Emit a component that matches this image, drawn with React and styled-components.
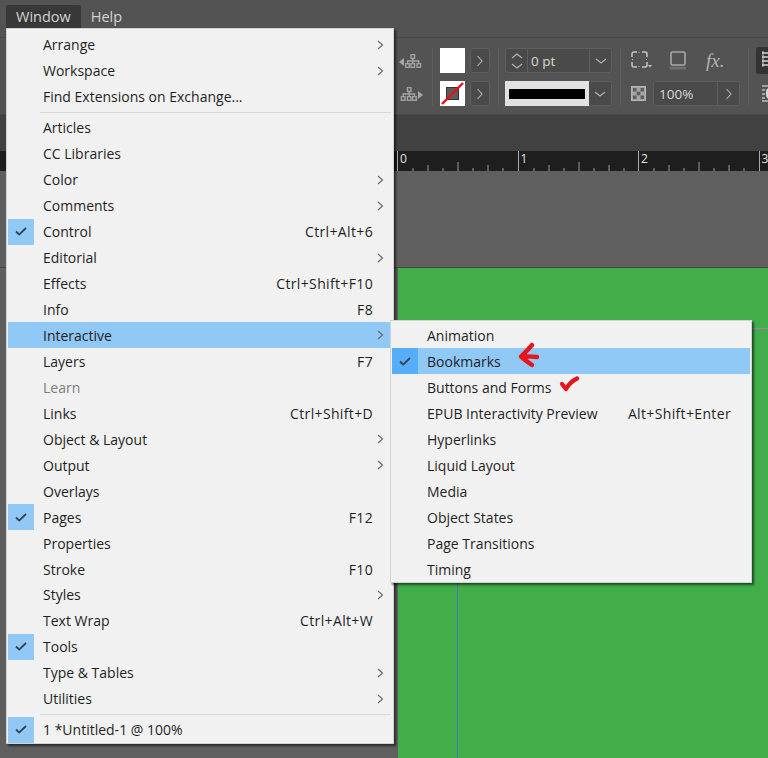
import React from "react";
import styled, { createGlobalStyle } from "styled-components";

const GlobalStyle = createGlobalStyle`
  html, body {
    margin: 0;
    padding: 0;
    background: #5f5f5f;
  }
  * {
    box-sizing: border-box;
  }
`;

const mainItems = [
  { label: "Arrange", arrow: true },
  { label: "Workspace", arrow: true },
  { label: "Find Extensions on Exchange..." },
  { divider: true },
  { label: "Articles" },
  { label: "CC Libraries" },
  { label: "Color", arrow: true },
  { label: "Comments", arrow: true },
  { label: "Control", checked: true, shortcut: "Ctrl+Alt+6" },
  { label: "Editorial", arrow: true },
  { label: "Effects", shortcut: "Ctrl+Shift+F10" },
  { label: "Info", shortcut: "F8" },
  { label: "Interactive", arrow: true, active: true },
  { label: "Layers", shortcut: "F7" },
  { label: "Learn", disabled: true },
  { label: "Links", shortcut: "Ctrl+Shift+D" },
  { label: "Object & Layout", arrow: true },
  { label: "Output", arrow: true },
  { label: "Overlays" },
  { label: "Pages", checked: true, shortcut: "F12" },
  { label: "Properties" },
  { label: "Stroke", shortcut: "F10" },
  { label: "Styles", arrow: true },
  { label: "Text Wrap", shortcut: "Ctrl+Alt+W" },
  { label: "Tools", checked: true },
  { label: "Type & Tables", arrow: true },
  { label: "Utilities", arrow: true },
  { divider: true },
  { label: "1 *Untitled-1 @ 100%", checked: true },
];

const subItems = [
  { label: "Animation" },
  { label: "Bookmarks", checked: true, active: true },
  { label: "Buttons and Forms" },
  { label: "EPUB Interactivity Preview", shortcut: "Alt+Shift+Enter" },
  { label: "Hyperlinks" },
  { label: "Liquid Layout" },
  { label: "Media" },
  { label: "Object States" },
  { label: "Page Transitions" },
  { label: "Timing" },
];

const Screen = styled.div`
  position: relative;
  width: 768px;
  height: 758px;
  overflow: hidden;
  background: #5f5f5f;
  font-family: "Open Sans", "Noto Sans", sans-serif;
`;

const MenuBar = styled.div`
  height: 38px;
  padding: 5px 0 0 6px;
  display: flex;
  background: #535353;
  border-bottom: 1px solid #4a4a4a;
`;

const BarItem = styled.div`
  height: 23px;
  padding: 0 10px;
  line-height: 24px;
  font-size: 14.5px;
  color: #d4d4d4;
  border-radius: 2px 2px 0 0;
  background: ${(p) => (p.$open ? "#383838" : "transparent")};
`;

const ControlPanel = styled.div`
  height: 76px;
  padding: 10px 0 0 399px;
  display: flex;
  background: #535353;
`;

const Group = styled.div`
  display: grid;
  grid-template-columns: ${(p) => p.$cols};
  grid-auto-rows: 25px;
  column-gap: ${(p) => p.$gap || 0}px;
  row-gap: 8px;
  align-items: center;
  justify-items: start;
  padding-right: ${(p) => p.$right}px;
  margin-right: ${(p) => p.$margin}px;
  border-right: ${(p) => (p.$last ? "none" : "1px solid #5c5c5c")};
  height: 58px;
`;

const Swatch = styled.div`
  position: relative;
  width: 25px;
  height: 25px;
  background: #fff;
  overflow: hidden;
`;

const SmallButton = styled.div`
  width: 20px;
  height: 25px;
  border: 1px solid #5e5e5e;
  border-radius: 3px;
  background: #4a4a4a;
  display: flex;
  align-items: center;
  justify-content: center;
`;

const Combo = styled.div`
  display: flex;
  align-items: stretch;
  width: ${(p) => p.$w}px;
  height: 25px;
  border: 1px solid #5e5e5e;
  border-radius: 3px;
  background: #4a4a4a;
  color: #d8d8d8;
  font-size: 13.5px;
`;

const Stepper = styled.div`
  flex: none;
  width: 21px;
  display: flex;
  flex-direction: column;
  align-items: center;
  justify-content: center;
  gap: 4px;
`;

const ComboPart = styled.div`
  display: flex;
  align-items: center;
  justify-content: ${(p) => (p.$text ? "flex-start" : "center")};
  width: ${(p) => (p.$text ? "auto" : `${p.$w}px`)};
  flex: ${(p) => (p.$text ? 1 : "none")};
  padding-left: ${(p) => p.$pad || 0}px;
  border-left: ${(p) => (p.$divided ? "1px solid #5e5e5e" : "none")};
`;

const StrokeSample = styled.div`
  flex: 1;
  display: flex;
  align-items: center;
  padding: 0 4px;
  margin: -1px 0 -1px -1px;
  background: #e1e1e1;
  &::before {
    content: "";
    flex: 1;
    height: 10px;
    background: #000;
  }
`;

const EffectsRow = styled.div`
  grid-column: 1 / -1;
  display: flex;
  align-items: center;
  gap: 16px;
`;

const FxLabel = styled.span`
  font-family: "Liberation Serif", serif;
  font-style: italic;
  font-size: 19px;
  color: #b4b4b4;
  margin-left: 1px;
`;

const TreeSvg = styled.svg`
  transform: ${(p) => (p.$flip ? "scaleX(-1)" : "none")};
`;

const StyleTile = styled.div`
  width: 20px;
  height: 27px;
  margin-top: -1px;
  padding: 3px 0 0 5px;
  background: ${(p) => (p.$dark ? "#333333" : "transparent")};
  border-radius: 3px;
`;

const Strip = styled.div`
  height: 37px;
  background: #424242;
  border-top: 1px solid #4a4a4a;
`;

const Ruler = styled.div`
  height: 20px;
  padding-left: 397px;
  display: flex;
  background: #1e1e1e;
`;

const RulerInch = styled.div`
  position: relative;
  flex: none;
  width: 120.5px;
  padding-left: 2px;
  border-left: 1px solid #a9a9a9;
  font-size: 12px;
  line-height: 15px;
  color: #e2e2e2;
`;

const RulerTicks = styled.svg`
  position: absolute;
  left: 0;
  bottom: 0;
`;

const Pasteboard = styled.div`
  height: 97px;
  background: #5f5f5f;
  border-bottom: 1px solid #444444;
`;

const PageArea = styled.div`
  height: 490px;
  padding-left: 398px;
`;

const GreenPage = styled.div`
  position: relative;
  height: 100%;
  background: #41ad4b;
`;

const BleedLine = styled.div`
  position: absolute;
  left: 0;
  right: 0;
  top: 60px;
  height: 1px;
  background: #a384a8;
`;

const ColumnLine = styled.div`
  position: absolute;
  left: 59px;
  top: 60px;
  bottom: 0;
  width: 1px;
  background: #5a72a6;
`;

const Menu = styled.div`
  position: absolute;
  left: ${(p) => p.$left}px;
  top: ${(p) => p.$top}px;
  width: ${(p) => p.$w}px;
  height: ${(p) => p.$h}px;
  padding: ${(p) => p.$pad};
  background: #f1f1f1;
  border: 1px solid #d3d3d3;
  box-shadow: 2px 2px 2px rgba(0, 0, 0, 0.55);
  font-size: 14px;
`;

const Row = styled.div`
  display: flex;
  align-items: center;
  height: 25.96px;
  color: ${(p) => (p.$disabled ? "#7d7d7d" : "#1f1f1f")};
  background: ${(p) => (p.$active ? "#90c8f6" : "transparent")};
`;

const CheckCell = styled.div`
  flex: none;
  width: 26px;
  height: 26px;
  margin-right: 9px;
  display: flex;
  align-items: center;
  justify-content: center;
  background: ${(p) =>
    !p.$checked ? "transparent" : p.$active ? "#56aefb" : "#90c8f6"};
`;

const Label = styled.span`
  flex: 1;
  white-space: nowrap;
`;

const Shortcut = styled.span`
  white-space: nowrap;
  letter-spacing: 0.35px;
  margin-right: ${(p) => p.$right}px;
`;

const ArrowCell = styled.div`
  flex: none;
  width: 15px;
  display: flex;
  align-items: center;
`;

const Divider = styled.div`
  height: 1px;
  margin: 2px 1px 2px 32px;
  background: #d7d7d7;
`;

const Annotation = styled.svg`
  position: absolute;
  left: ${(p) => p.$left}px;
  top: ${(p) => p.$top}px;
`;

const Check = () => (
  <svg width="12" height="9" viewBox="0 0 12 9">
    <path d="M1 4.5 4.2 7.6 11 1" fill="none" stroke="#35414d" strokeWidth="1.8" />
  </svg>
);

const MenuArrow = () => (
  <svg width="7" height="10" viewBox="0 0 7 10">
    <path d="M1 1l4.5 4L1 9" fill="none" stroke="#6b6b6b" strokeWidth="1.2" />
  </svg>
);

const Chevron = ({ dir = "right" }) => {
  const paths = {
    right: "M1.5 1 6 6 1.5 11",
    down: "M1 1 6 5l5-4",
    up: "M1 5 6 1l5 4",
  };
  const size = dir === "right" ? [8, 12] : [12, 6];
  return (
    <svg width={size[0]} height={size[1]} viewBox={`0 0 ${size[0]} ${size[1]}`}>
      <path d={paths[dir]} fill="none" stroke="#b4b4b4" strokeWidth="1.1" />
    </svg>
  );
};

const TreeIcon = ({ flip }) => (
  <TreeSvg $flip={flip} width="24" height="14" viewBox="0 0 24 14">
    <path d="M0 8l5-4v8z" fill="#a6a6a6" />
    <g fill="none" stroke="#a6a6a6" strokeWidth="1.3">
      <rect x="12" y="0.7" width="3.6" height="3.6" />
      <rect x="6.7" y="9.7" width="3.6" height="3.6" />
      <rect x="12" y="9.7" width="3.6" height="3.6" />
      <rect x="18" y="9.7" width="3.6" height="3.6" />
      <path d="M13.8 4.3v5.4M8.5 9.7V7h11.3v2.7" />
    </g>
  </TreeSvg>
);

const FrameIcon = () => (
  <svg width="22" height="20" viewBox="0 0 22 20">
    <path
      d="M1 6V3a2 2 0 0 1 2-2h3M11 1h3a2 2 0 0 1 2 2v3M16 11v3a2 2 0 0 1-2 2h-3M6 16H3a2 2 0 0 1-2-2v-3"
      fill="none"
      stroke="#c6c6c6"
      strokeWidth="1.5"
    />
    <path d="M1 8.5h1M15 8.5h1M8 1v1M8 15v1" stroke="#c6c6c6" />
    <path d="M17 14h4l-2 2.5z" fill="#c6c6c6" />
  </svg>
);

const ShadowIcon = () => (
  <svg width="20" height="22" viewBox="0 0 20 22">
    <rect x="2" y="2" width="14" height="13" rx="1.5" fill="none" stroke="#a8a8a8" strokeWidth="1.6" />
    <path d="M1 18h16" stroke="#6f6f6f" strokeWidth="3" />
  </svg>
);

const OpacityIcon = () => (
  <svg width="15" height="15" viewBox="0 0 15 15">
    <rect x="0.5" y="0.5" width="14" height="14" fill="#a3a3a3" stroke="#b5b5b5" />
    <path d="M2 2h3.5v3.5H2zM9.5 2H13v3.5H9.5zM5.7 5.7h3.6v3.6H5.7zM2 9.5h3.5V13H2zM9.5 9.5H13V13H9.5z" fill="#5e5e5e" />
  </svg>
);

const ParagraphIcon = () => (
  <svg width="15" height="20" viewBox="0 0 15 20">
    <path d="M1 3h14M1 7h14M1 11h14M1 15h14" stroke="#d2d2d2" strokeWidth="1.4" />
    <path d="M2 1v16" stroke="#d2d2d2" />
  </svg>
);

const TextWrapIcon = () => (
  <svg width="15" height="20" viewBox="0 0 15 20">
    <path d="M1 3h14M1 7h3M1 11h3M1 15h3M1 18h14" stroke="#b9b9b9" strokeWidth="1.3" />
    <rect x="5" y="5" width="12" height="11" rx="4" fill="#d8d8d8" />
  </svg>
);

const MenuRows = ({ items, right }) =>
  items.map((item, i) =>
    item.divider ? (
      <Divider key={i} />
    ) : (
      <Row key={item.label} $active={item.active} $disabled={item.disabled}>
        <CheckCell $checked={item.checked} $active={item.active}>
          {item.checked && <Check />}
        </CheckCell>
        <Label>{item.label}</Label>
        {item.shortcut && <Shortcut $right={right}>{item.shortcut}</Shortcut>}
        {item.arrow && (
          <ArrowCell>
            <MenuArrow />
          </ArrowCell>
        )}
      </Row>
    )
  );

const ticks = [15, 30, 45, 60, 75, 90, 105];

const RulerMark = ({ n }) => (
  <RulerInch>
    {n}
    <RulerTicks width="120" height="9" viewBox="0 0 120 9">
      {ticks.map((x) => (
        <line key={x} x1={x} x2={x} y1={x === 60 ? 0 : x % 30 === 0 ? 3 : 6} y2="9" stroke="#9b9b9b" />
      ))}
    </RulerTicks>
  </RulerInch>
);

export default function App() {
  return (
    <Screen>
      <GlobalStyle />
      <MenuBar>
        <BarItem $open>Window</BarItem>
        <BarItem>Help</BarItem>
      </MenuBar>

      <ControlPanel>
        <Group $cols="24px" $right={9} $margin={7}>
          <TreeIcon />
          <TreeIcon flip />
        </Group>
        <Group $cols="25px 20px" $gap={5} $right={8} $margin={6}>
          <Swatch />
          <SmallButton><Chevron /></SmallButton>
          <Swatch>
            <svg width="25" height="25" viewBox="0 0 25 25">
              <rect x="6.5" y="6.5" width="12" height="12" fill="#5b5b5b" stroke="#333" />
              <path d="M2 23 23 2" stroke="#e8101a" strokeWidth="2.4" />
            </svg>
          </Swatch>
          <SmallButton><Chevron /></SmallButton>
        </Group>
        <Group $cols="107px" $right={8} $margin={10}>
          <Combo $w={107}>
            <Stepper>
              <Chevron dir="up" />
              <Chevron dir="down" />
            </Stepper>
            <ComboPart $text $divided $pad={3}>0 pt</ComboPart>
            <ComboPart $w={22} $divided><Chevron dir="down" /></ComboPart>
          </Combo>
          <Combo $w={107}>
            <StrokeSample />
            <ComboPart $w={22}><Chevron dir="down" /></ComboPart>
          </Combo>
        </Group>
        <Group $cols="22px 87px" $right={8} $margin={7}>
          <EffectsRow>
            <FrameIcon />
            <ShadowIcon />
            <FxLabel>fx.</FxLabel>
          </EffectsRow>
          <OpacityIcon />
          <Combo $w={87}>
            <ComboPart $text $pad={5}>100%</ComboPart>
            <ComboPart $w={22} $divided><Chevron /></ComboPart>
          </Combo>
        </Group>
        <Group $cols="20px" $right={0} $margin={0} $last>
          <StyleTile $dark><ParagraphIcon /></StyleTile>
          <StyleTile><TextWrapIcon /></StyleTile>
        </Group>
      </ControlPanel>

      <Strip />
      <Ruler>
        <RulerMark n="0" />
        <RulerMark n="1" />
        <RulerMark n="2" />
        <RulerMark n="3" />
      </Ruler>
      <Pasteboard />
      <PageArea>
        <GreenPage>
          <BleedLine />
          <ColumnLine />
        </GreenPage>
      </PageArea>

      <Menu $left={6} $top={28} $w={388} $h={716} $pad="3px 1px 0 1px">
        <MenuRows items={mainItems} right={19} />
      </Menu>

      <Menu $left={390} $top={320} $w={362} $h={263} $pad="1.5px 1px 0 1px">
        <MenuRows items={subItems} right={19} />
      </Menu>

      <Annotation $left={516} $top={341} width="26" height="28" viewBox="0 0 26 28">
        <path
          d="M16 4Q11 10 5 15.5Q10 20 16 24M5 15.5Q14 15 21 16"
          fill="none"
          stroke="#e8141c"
          strokeWidth="4.4"
          strokeLinecap="round"
          strokeLinejoin="round"
        />
      </Annotation>
      <Annotation $left={558} $top={375} width="24" height="18" viewBox="0 0 24 18">
        <path
          d="M4 9 8 14Q12 7 19 3.5"
          fill="none"
          stroke="#e8141c"
          strokeWidth="4.2"
          strokeLinecap="round"
          strokeLinejoin="round"
        />
      </Annotation>
    </Screen>
  );
}
